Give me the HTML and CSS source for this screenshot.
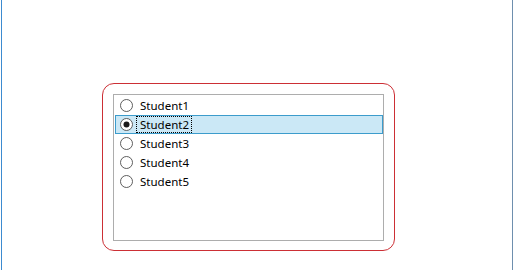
FILE: index.html
```html
<!DOCTYPE html>
<html lang="en">
<head>
    <meta charset="UTF-8">
    <title>Students</title>
    <link rel="stylesheet" href="styles.css">
</head>
<body>
    <div class="window">
        <div class="group">
            <div class="listbox">
                <div class="row">
                    <svg class="radio" width="13" height="13" viewBox="0 0 13 13"><circle cx="6.5" cy="6.5" r="6" fill="#fff" stroke="#4d4d4d" stroke-width="0.9"/></svg>
                    <span class="label">Student1</span>
                </div>
                <div class="row selected">
                    <svg class="radio" width="13" height="13" viewBox="0 0 13 13"><circle cx="6.5" cy="6.5" r="6" fill="#fff" stroke="#4d4d4d" stroke-width="0.9"/><circle cx="6.5" cy="6.5" r="3" fill="#1a1a1a"/></svg>
                    <span class="label focus">Student2</span>
                </div>
                <div class="row">
                    <svg class="radio" width="13" height="13" viewBox="0 0 13 13"><circle cx="6.5" cy="6.5" r="6" fill="#fff" stroke="#4d4d4d" stroke-width="0.9"/></svg>
                    <span class="label">Student3</span>
                </div>
                <div class="row">
                    <svg class="radio" width="13" height="13" viewBox="0 0 13 13"><circle cx="6.5" cy="6.5" r="6" fill="#fff" stroke="#4d4d4d" stroke-width="0.9"/></svg>
                    <span class="label">Student4</span>
                </div>
                <div class="row">
                    <svg class="radio" width="13" height="13" viewBox="0 0 13 13"><circle cx="6.5" cy="6.5" r="6" fill="#fff" stroke="#4d4d4d" stroke-width="0.9"/></svg>
                    <span class="label">Student5</span>
                </div>
            </div>
        </div>
    </div>
</body>
</html>
```

FILE: styles.css
```css
body {
    margin: 0;
    background: #fff;
    font-family: "Noto Sans", "Open Sans", sans-serif;
    font-size: 11.5px;
    color: #000;
}

.window {
    margin-left: 1px;
    width: 512px;
    height: 270px;
    border-left: 1px solid #3d8bd0;
    border-right: 1px solid #6e8fae;
    padding: 83px 0 0 100px;
    box-sizing: border-box;
}

.group {
    width: 293px;
    height: 168px;
    box-sizing: border-box;
    border: 1px solid #cc2f35;
    border-radius: 12px;
    padding: 10px;
}

.listbox {
    width: 271px;
    height: 147px;
    box-sizing: border-box;
    border: 1px solid #adadad;
    padding: 1px 0 0 1px;
}

.row {
    display: flex;
    align-items: center;
    height: 19px;
    box-sizing: border-box;
    padding-left: 5px;
    border: 1px solid transparent;
}

.row .radio {
    flex: none;
    margin-left: -1px;
}

.row.selected {
    background: #cbe8f6;
    border-color: #3c9ccc;
}

.label {
    margin-left: 3px;
    padding: 0 2px 0 3px;
    line-height: 15px;
    border: 1px dotted transparent;
}

.label.focus {
    border-color: #000;
}
```
